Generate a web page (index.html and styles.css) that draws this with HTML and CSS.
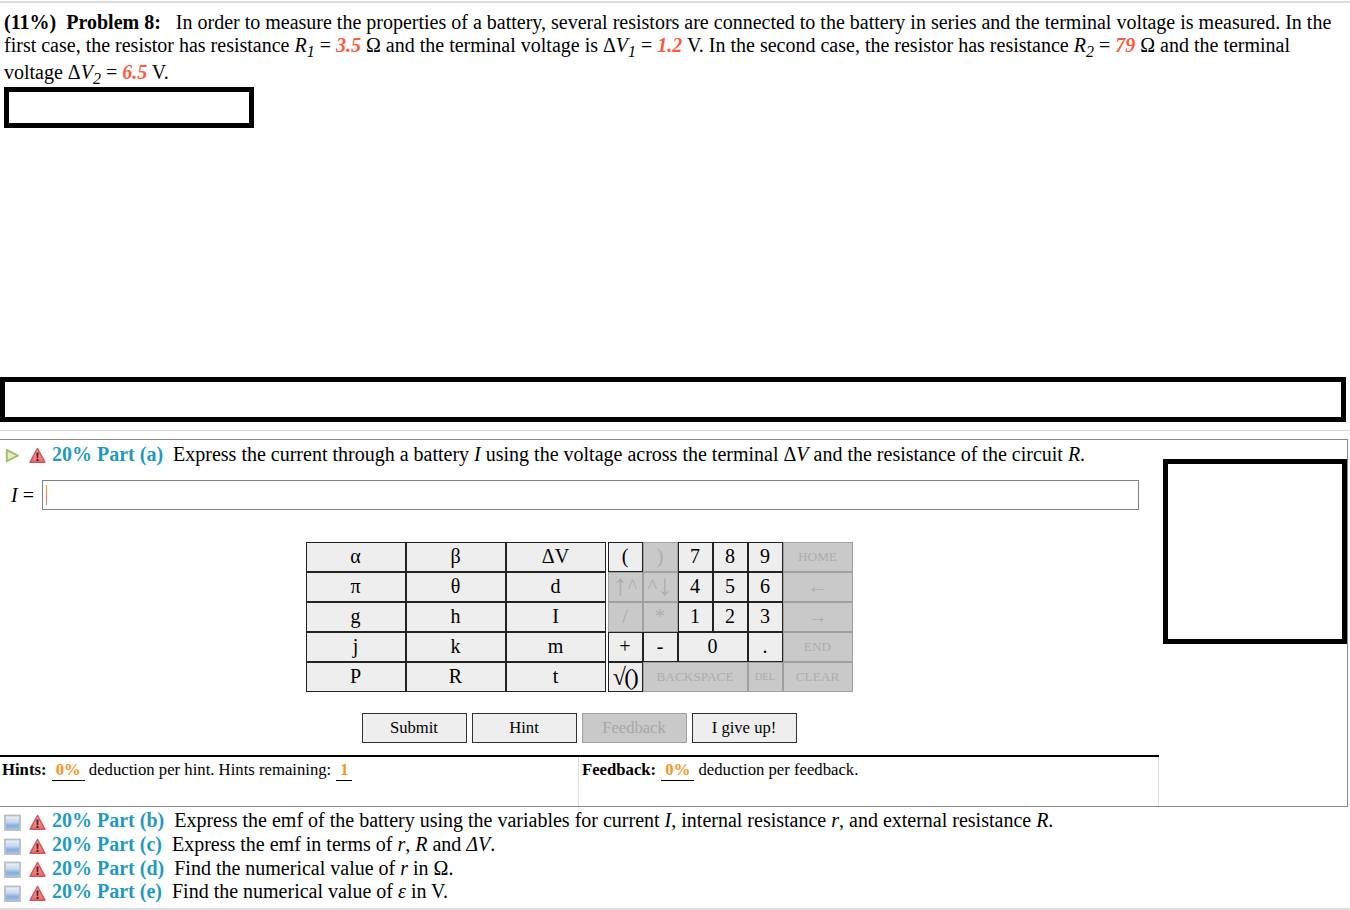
FILE: index.html
```html
<!DOCTYPE html>
<html lang="en">
<head>
<meta charset="utf-8">
<title>Problem 8</title>
<link rel="stylesheet" href="styles.css">
</head>
<body>
<svg class="defs" width="0" height="0" aria-hidden="true">
  <defs>
    <linearGradient id="blueFill" x1="0" y1="0" x2="0" y2="1">
      <stop offset="0" stop-color="#f0f3f8"/>
      <stop offset="0.45" stop-color="#c6d7ee"/>
      <stop offset="0.7" stop-color="#86acdf"/>
      <stop offset="1" stop-color="#a9c4e8"/>
    </linearGradient>
    <linearGradient id="redFill" x1="0" y1="0" x2="0" y2="1">
      <stop offset="0" stop-color="#f6b0b0"/>
      <stop offset="1" stop-color="#ea6a6c"/>
    </linearGradient>
    <symbol id="warn" viewBox="0 0 17 17">
      <path d="M8.5 1.5 15.9 15.2H1.1Z" fill="url(#redFill)" stroke="#d2555a" stroke-width="1.5" stroke-linejoin="round"/>
      <path d="M7.4 5.6h2.2l-.4 5.6H7.8Z" fill="#641a1c"/>
      <rect x="7.5" y="12" width="2" height="2" fill="#641a1c"/>
    </symbol>
    <symbol id="play" viewBox="0 0 17 17">
      <path d="M2.8 3 14 8.6 2.8 14.2Z" fill="#e6eec6" stroke="#a5c06f" stroke-width="2" stroke-linejoin="round"/>
    </symbol>
    <symbol id="box" viewBox="0 0 17 17">
      <rect x="1" y="1.5" width="15" height="14.5" fill="url(#blueFill)" stroke="#b5bfc9" stroke-width="1.8"/>
    </symbol>
  </defs>
</svg>

<div class="top-rule"></div>
<p class="problem">
  <b>(11%)&nbsp; Problem 8:</b>&nbsp;&nbsp; In order to measure the properties of a battery, several resistors are connected to the battery in series and the terminal voltage is measured. In the first case, the resistor has resistance <i>R<sub>1</sub></i> = <b class="val">3.5</b> Ω and the terminal voltage is Δ<i>V<sub>1</sub></i> = <b class="val">1.2</b> V. In the second case, the resistor has resistance <i>R<sub>2</sub></i> = <b class="val">79</b> Ω and the terminal voltage Δ<i>V<sub>2</sub></i> = <b class="val">6.5</b> V.
</p>
<div class="frame frame-small"></div>
<div class="figure-space"></div>
<div class="frame frame-wide"></div>
<div class="light-rule"></div>

<section class="panel">
  <div class="frame frame-side"></div>
  <div class="part part-open">
    <svg class="ico ico-state"><use href="#play"/></svg>
    <svg class="ico ico-warn"><use href="#warn"/></svg>
    <span class="label">20% Part (a)</span>
    <span class="ptext">Express the current through a battery <i>I</i> using the voltage across the terminal Δ<i>V</i> and the resistance of the circuit <i>R</i>.</span>
  </div>
  <div class="answer">
    <span class="answer-label"><i>I</i> =</span>
    <div class="answer-input"><span class="caret"></span></div>
  </div>

  <div class="keypad">
    <div class="vars">
      <button class="key">α</button><button class="key">β</button><button class="key">ΔV</button>
      <button class="key">π</button><button class="key">θ</button><button class="key">d</button>
      <button class="key">g</button><button class="key">h</button><button class="key">I</button>
      <button class="key">j</button><button class="key">k</button><button class="key">m</button>
      <button class="key">P</button><button class="key">R</button><button class="key">t</button>
    </div>
    <div class="pad">
      <button class="key">(</button><button class="key off">)</button><button class="key">7</button><button class="key">8</button><button class="key">9</button><button class="key off small">HOME</button>
      <button class="key off"><span class="arr">↑</span>^</button><button class="key off">^<span class="arr">↓</span></button><button class="key">4</button><button class="key">5</button><button class="key">6</button><button class="key off">←</button>
      <button class="key off">/</button><button class="key off">*</button><button class="key">1</button><button class="key">2</button><button class="key">3</button><button class="key off">→</button>
      <button class="key">+</button><button class="key">-</button><button class="key span2">0</button><button class="key">.</button><button class="key off small">END</button>
      <button class="key tight">√()</button><button class="key off small span3">BACKSPACE</button><button class="key off tiny">DEL</button><button class="key off small">CLEAR</button>
    </div>
  </div>

  <div class="actions">
    <button class="btn">Submit</button>
    <button class="btn">Hint</button>
    <button class="btn off">Feedback</button>
    <button class="btn">I give up!</button>
  </div>

  <div class="info">
    <div class="info-cell"><b>Hints:</b> <span class="blank">0%</span> deduction per hint. Hints remaining: <span class="blank blank-n">1</span></div>
    <div class="info-cell info-right"><b>Feedback:</b> <span class="blank">0%</span> deduction per feedback.</div>
  </div>
</section>

<div class="parts">
  <div class="part">
    <svg class="ico ico-state"><use href="#box"/></svg>
    <svg class="ico ico-warn"><use href="#warn"/></svg>
    <span class="label">20% Part (b)</span>
    <span class="ptext">Express the emf of the battery using the variables for current <i>I</i>, internal resistance <i>r</i>, and external resistance <i>R</i>.</span>
  </div>
  <div class="part">
    <svg class="ico ico-state"><use href="#box"/></svg>
    <svg class="ico ico-warn"><use href="#warn"/></svg>
    <span class="label">20% Part (c)</span>
    <span class="ptext">Express the emf in terms of <i>r</i>, <i>R</i> and <i>ΔV</i>.</span>
  </div>
  <div class="part">
    <svg class="ico ico-state"><use href="#box"/></svg>
    <svg class="ico ico-warn"><use href="#warn"/></svg>
    <span class="label">20% Part (d)</span>
    <span class="ptext">Find the numerical value of <i>r</i> in Ω.</span>
  </div>
  <div class="part">
    <svg class="ico ico-state"><use href="#box"/></svg>
    <svg class="ico ico-warn"><use href="#warn"/></svg>
    <span class="label">20% Part (e)</span>
    <span class="ptext">Find the numerical value of <i>ε</i> in V.</span>
  </div>
</div>
<div class="bottom-rule"></div>
</body>
</html>
```
FILE: styles.css
```css
* { box-sizing: border-box; }
html, body { margin: 0; padding: 0; background: #fff; }
body {
  width: 1350px;
  height: 910px;
  overflow: hidden;
  font-family: "Liberation Serif", "Times New Roman", serif;
  font-size: 20px;
  color: #000;
}
.defs { position: absolute; }
.top-rule { height: 2px; margin-top: 1px; background: #ddd; }
.problem {
  height: 84px;
  margin: 0;
  padding: 8px 16px 0 4px;
  font-size: 20px;
  line-height: normal;
}
.problem sub { font-size: 16px; vertical-align: -5px; }
.val { color: #ff5a3c; font-style: italic; }
.frame { border: 5px solid #000; background: #fff; }
.frame-small { width: 250px; height: 41px; margin-left: 4px; }
.figure-space { height: 249px; }
.frame-wide { width: 1346px; height: 45px; }
.light-rule { height: 1px; margin-top: 8px; background: #d6d6d6; }
.panel {
  position: relative;
  margin-top: 8px;
  width: 1348px;
  height: 368px;
  border-top: 1px solid #888;
  border-right: 1px solid #888;
  border-bottom: 1px solid #888;
}
.frame-side {
  position: absolute;
  top: 19px;
  left: 1163px;
  width: 184px;
  height: 185px;
}
.part {
  display: flex;
  align-items: center;
  height: 23.7px;
  padding-left: 4px;
  white-space: pre;
}
.part-open { margin-top: 2px; height: 24px; }
.ico { width: 17px; height: 17px; flex: none; margin-top: 3px; }
.ico-warn { margin-left: 8px; }
.label {
  margin-left: 6px;
  color: #1f9bbd;
  font-weight: bold;
}
.ptext { margin-left: 10px; }
.answer {
  display: flex;
  align-items: center;
  height: 30px;
  margin-top: 14px;
}
.answer-label { width: 42px; padding-left: 11px; white-space: nowrap; }
.answer-input {
  display: flex;
  align-items: center;
  width: 1097px;
  height: 30px;
  padding-left: 3px;
  border: 1px solid #808080;
}
.caret { width: 1px; height: 20px; background: linear-gradient(#f5a623, #ef6f80); }
.keypad {
  display: flex;
  gap: 2px;
  margin: 32px 0 0 306px;
}
.vars {
  display: grid;
  grid-template-columns: repeat(3, 100px);
  grid-auto-rows: 30px;
}
.pad {
  display: grid;
  grid-template-columns: repeat(5, 35px) 70px;
  grid-auto-rows: 30px;
}
.key {
  margin: 0;
  padding: 0 1px 1px 0;
  border: 1px solid #222;
  background: #eee;
  color: #000;
  font: 20px "Liberation Serif", serif;
  white-space: nowrap;
}
.key.off { background: #c9c9c9; border-color: #a0a0a0; color: #adadad; }
.key.small { font-size: 13.3px; }
.key.tiny { font-size: 10.6px; }
.key.tight { letter-spacing: -1.5px; font-size: 24px; line-height: 1; }
.arr { font-size: 30px; line-height: 0; vertical-align: -2px; }
.span2 { grid-column: span 2; }
.span3 { grid-column: span 3; }
.pad .key.small.span3 { grid-column: 2 / span 3; }
.actions {
  display: flex;
  gap: 5px;
  margin: 21px 0 0 362px;
}
.btn {
  width: 105px;
  height: 30px;
  margin: 0;
  padding: 0 1px 0 0;
  border: 1px solid #333;
  background: #eee;
  color: #000;
  font: 16.6px "Liberation Serif", serif;
}
.btn.off { background: #c9c9c9; border-color: #a0a0a0; color: #a8a8a8; }
.info {
  display: grid;
  grid-template-columns: 578px 581px;
  width: 1159px;
  height: 51px;
  margin-top: 12px;
  border-top: 2px solid #000;
  font-size: 16.7px;
}
.info-cell { padding: 3px 0 0 2px; white-space: pre-wrap; }
.info-right { padding-left: 3px; border-left: 1px solid #ddd; border-right: 1px solid #ddd; }
.blank {
  display: inline-block;
  min-width: 33px;
  margin-left: 1px;
  border-bottom: 1px solid #000;
  color: #f7941d;
  font-weight: bold;
  text-align: center;
}
.blank-n { min-width: 16px; }
.parts { padding-top: 2px; }
.bottom-rule { height: 2px; background: #ddd; margin-top: 4px; }
```
